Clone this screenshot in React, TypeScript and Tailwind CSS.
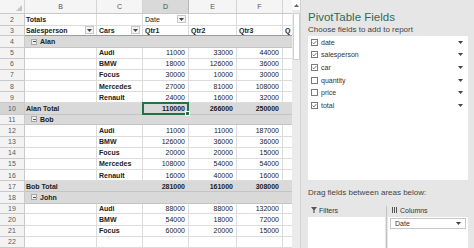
import React from 'react';

type Kind = 'title' | 'head' | 'group' | 'item' | 'total' | 'blank';
type Row = { n: number; kind: Kind; b?: string; c?: string; v?: string[] };

const rows: Row[] = [
  { n: 2, kind: 'title' },
  { n: 3, kind: 'head' },
  { n: 4, kind: 'group', b: 'Alan' },
  { n: 5, kind: 'item', c: 'Audi', v: ['11000', '33000', '44000'] },
  { n: 6, kind: 'item', c: 'BMW', v: ['18000', '126000', '36000'] },
  { n: 7, kind: 'item', c: 'Focus', v: ['30000', '10000', '30000'] },
  { n: 8, kind: 'item', c: 'Mercedes', v: ['27000', '81000', '108000'] },
  { n: 9, kind: 'item', c: 'Renault', v: ['24000', '16000', '32000'] },
  { n: 10, kind: 'total', b: 'Alan Total', v: ['110000', '266000', '250000'] },
  { n: 11, kind: 'group', b: 'Bob' },
  { n: 12, kind: 'item', c: 'Audi', v: ['11000', '11000', '187000'] },
  { n: 13, kind: 'item', c: 'BMW', v: ['126000', '36000', '36000'] },
  { n: 14, kind: 'item', c: 'Focus', v: ['20000', '20000', '15000'] },
  { n: 15, kind: 'item', c: 'Mercedes', v: ['108000', '54000', '54000'] },
  { n: 16, kind: 'item', c: 'Renault', v: ['16000', '40000', '16000'] },
  { n: 17, kind: 'total', b: 'Bob Total', v: ['281000', '161000', '308000'] },
  { n: 18, kind: 'group', b: 'John' },
  { n: 19, kind: 'item', c: 'Audi', v: ['88000', '88000', '132000'] },
  { n: 20, kind: 'item', c: 'BMW', v: ['54000', '18000', '72000'] },
  { n: 21, kind: 'item', c: 'Focus', v: ['60000', '20000', '15000'] },
  { n: 22, kind: 'blank' },
];

const fields = [
  { name: 'date', on: true },
  { name: 'salesperson', on: true },
  { name: 'car', on: true },
  { name: 'quantity', on: false },
  { name: 'price', on: false },
  { name: 'total', on: true },
];

const Caret = () => (
  <svg width="5" height="3" viewBox="0 0 5 3"><path d="M0 0h5L2.5 3z" fill="#444" /></svg>
);

const DropBtn = () => (
  <span className="w-[9px] h-[8px] bg-[#f4f4f4] border border-[#c8c8c8] flex items-center justify-center">
    <Caret />
  </span>
);

const CheckBox = ({ on }: { on: boolean }) => (
  <span className="w-[7px] h-[7px] border border-[#7a7a7a] bg-white flex items-center justify-center">
    {on && (
      <svg width="5" height="5" viewBox="0 0 5 5"><path d="M0.6 2.6l1.3 1.3L4.4 1" fill="none" stroke="#555" strokeWidth="0.8" /></svg>
    )}
  </span>
);

const cell = 'h-full flex items-center border-r border-[#dcdcdc] overflow-hidden whitespace-nowrap';

const SheetRow: React.FC<{ r: Row; i: number }> = ({ r, i }) => {
  const h = i % 2 === 0 ? 'h-[12px]' : 'h-[11px]';
  const gray = r.kind === 'group' || r.kind === 'total';
  const bottom = r.kind === 'head' ? 'border-b border-[#9c9c9c]' : gray ? 'border-b border-[#c4c4c4]' : 'border-b border-[#dcdcdc]';
  const fill = gray ? 'bg-[#d9d9d9] border-r-[#d9d9d9]' : 'bg-white';
  const bold = r.kind === 'head' || gray ? 'font-bold' : '';
  const num = (k: number) => r.v?.[k] ?? '';

  return (
    <div className={`flex ${h}`}>
      <div className={`w-[25px] shrink-0 h-full flex items-center justify-center border-r border-b border-[#c9c9c9] text-[#5a5a5a] ${r.n === 10 ? 'bg-[#d4d4d4]' : 'bg-[#f3f3f3]'}`}>
        {r.n}
      </div>
      <div className={`flex flex-1 ${bottom}`}>
        {/* B */}
        <div className={`${cell} ${fill} w-[72px] px-[1px] ${bold}`}>
          {r.kind === 'title' && <span className="font-bold">Totals</span>}
          {r.kind === 'head' && (
            <div className="flex w-full items-center justify-between pr-[1px]">
              <span>Salesperson</span>
              <DropBtn />
            </div>
          )}
          {r.kind === 'group' && (
            <div className="flex items-center pl-[5px] gap-[3px]">
              <span className="w-[6px] h-[6px] bg-[#eeeeee] border border-[#a8a8a8] flex items-center justify-center">
                <span className="w-[3px] h-px bg-[#555]" />
              </span>
              <span>{r.b}</span>
            </div>
          )}
          {r.kind === 'total' && <span>{r.b}</span>}
        </div>
        {/* C */}
        <div className={`${cell} ${fill} w-[46px] px-[2px] ${bold} ${r.kind === 'item' ? 'font-bold' : ''}`}>
          {r.kind === 'head' && (
            <div className="flex w-full items-center justify-between">
              <span>Cars</span>
              <DropBtn />
            </div>
          )}
          {r.kind === 'item' && r.c}
        </div>
        {/* D */}
        <div className={`${cell} ${fill} w-[46px] ${bold} relative overflow-visible`}>
          {r.kind === 'title' && (
            <div className="flex w-full items-center justify-between px-[2px]">
              <span>Date</span>
              <DropBtn />
            </div>
          )}
          {r.kind === 'head' && <span className="px-[2px]">Qtr1</span>}
          {(r.kind === 'item' || r.kind === 'total') && <span className="w-full text-right pr-[3px]">{num(0)}</span>}
          {r.n === 10 && (
            <span className="absolute -left-px -top-px -right-[1px] -bottom-[1px] border-2 border-[#217346] z-10">
              <span className="absolute -right-[3px] -bottom-[3px] w-[5px] h-[5px] bg-[#217346] border border-white" />
            </span>
          )}
        </div>
        {/* E */}
        <div className={`${cell} ${fill} w-[48px] ${bold}`}>
          {r.kind === 'head' && <span className="px-[2px]">Qtr2</span>}
          {(r.kind === 'item' || r.kind === 'total') && <span className="w-full text-right pr-[3px]">{num(1)}</span>}
        </div>
        {/* F */}
        <div className={`${cell} ${fill} w-[46px] ${bold}`}>
          {r.kind === 'head' && <span className="px-[2px]">Qtr3</span>}
          {(r.kind === 'item' || r.kind === 'total') && <span className="w-full text-right pr-[3px]">{num(2)}</span>}
        </div>
        {/* G */}
        <div className={`h-full flex items-center overflow-hidden ${gray ? 'bg-[#d9d9d9]' : 'bg-white'} w-[9px] ${bold}`}>
          {r.kind === 'head' && <span className="pl-[2px]">Q</span>}
        </div>
      </div>
    </div>
  );
};

const App: React.FC = () => {
  return (
    <div className="w-[474px] h-[248px] overflow-hidden flex bg-white text-[#222] font-['Liberation_Sans',Arial,sans-serif] text-[7px] leading-none">
      {/* sheet */}
      <div className="w-[292px] h-[248px] overflow-hidden flex flex-col">
        <div className="flex h-[14px] shrink-0 bg-[#f5f5f5] text-[#555] border-b border-[#c9c9c9]">
          <div className="w-[25px] relative border-r border-[#d4d4d4]">
            <svg className="absolute right-[2px] bottom-[2px]" width="6" height="6" viewBox="0 0 6 6"><path d="M6 0v6H0z" fill="#c4c4c4" /></svg>
          </div>
          <div className="w-[72px] flex items-center justify-center border-r border-[#d4d4d4]">B</div>
          <div className="w-[46px] flex items-center justify-center border-r border-[#d4d4d4]">C</div>
          <div className="w-[46px] flex items-center justify-center border-r border-[#b9b9b9] bg-[#d9d9d9] text-[#1f5b3e]">D</div>
          <div className="w-[48px] flex items-center justify-center border-r border-[#d4d4d4]">E</div>
          <div className="w-[46px] flex items-center justify-center border-r border-[#d4d4d4]">F</div>
          <div className="flex-1" />
        </div>
        {rows.map((r, i) => (
          <SheetRow key={r.n} r={r} i={i} />
        ))}
      </div>

      {/* scrollbar */}
      <div className="w-[8px] h-[248px] bg-[#ebebeb] flex flex-col items-center shrink-0">
        <div className="h-[10px] w-full bg-white flex items-center justify-center">
          <svg width="5" height="3" viewBox="0 0 5 3"><path d="M0 3h5L2.5 0z" fill="#666" /></svg>
        </div>
        <div className="mt-[3px] h-[47px] w-[7px] bg-white border border-[#d0d0d0]" />
      </div>

      {/* PivotTable Fields panel */}
      <div className="w-[174px] h-[248px] shrink-0 bg-[#e6e6e6] border-l border-[#d2d2d2] pl-[7px] pr-[6px] flex flex-col">
        <div className="h-[24px] flex items-end">
          <span className="text-[11.5px] leading-[14px] text-[#2f6b58]">PivotTable Fields</span>
        </div>
        <div className="h-[12px] flex items-center text-[8px] text-[#444]">Choose fields to add to report</div>
        <div className="h-[144px] bg-white flex flex-col pl-[3px] pr-[5px]">
          {fields.map((f) => (
            <div key={f.name} className="h-[12.6px] flex items-center gap-[3px] text-[#333]">
              <CheckBox on={f.on} />
              <span className="flex-1">{f.name}</span>
              <Caret />
            </div>
          ))}
        </div>
        <div className="h-[26px] flex items-center text-[8px] text-[#444]">Drag fields between areas below:</div>
        <div className="flex flex-1">
          <div className="w-[77px] flex flex-col">
            <div className="h-[11px] pb-[3px] flex items-center gap-[2px] pl-[3px] text-[#333]">
              <svg width="6" height="6" viewBox="0 0 6 6"><path d="M0 0h6L3.6 3v3H2.4V3z" fill="#555" /></svg>
              <span>Filters</span>
            </div>
            <div className="flex-1 bg-white" />
          </div>
          <div className="w-[3px] flex justify-center">
            <div className="w-px h-full bg-[#c4c4c4]" />
          </div>
          <div className="flex-1 flex flex-col">
            <div className="h-[11px] pb-[3px] flex items-center gap-[3px] pl-[4px] text-[#333]">
              <svg width="5" height="6" viewBox="0 0 5 6"><path d="M0 0h1v6H0zM2 0h1v6H2zM4 0h1v6H4z" fill="#555" /></svg>
              <span>Columns</span>
            </div>
            <div className="flex-1 bg-white pt-px px-[2px]">
              <div className="h-[11px] bg-white border border-[#c8c8c8] flex items-center justify-between pl-[4px] pr-[4px] text-[#333]">
                <span>Date</span>
                <Caret />
              </div>
            </div>
          </div>
        </div>
      </div>
    </div>
  );
};

export default App;
